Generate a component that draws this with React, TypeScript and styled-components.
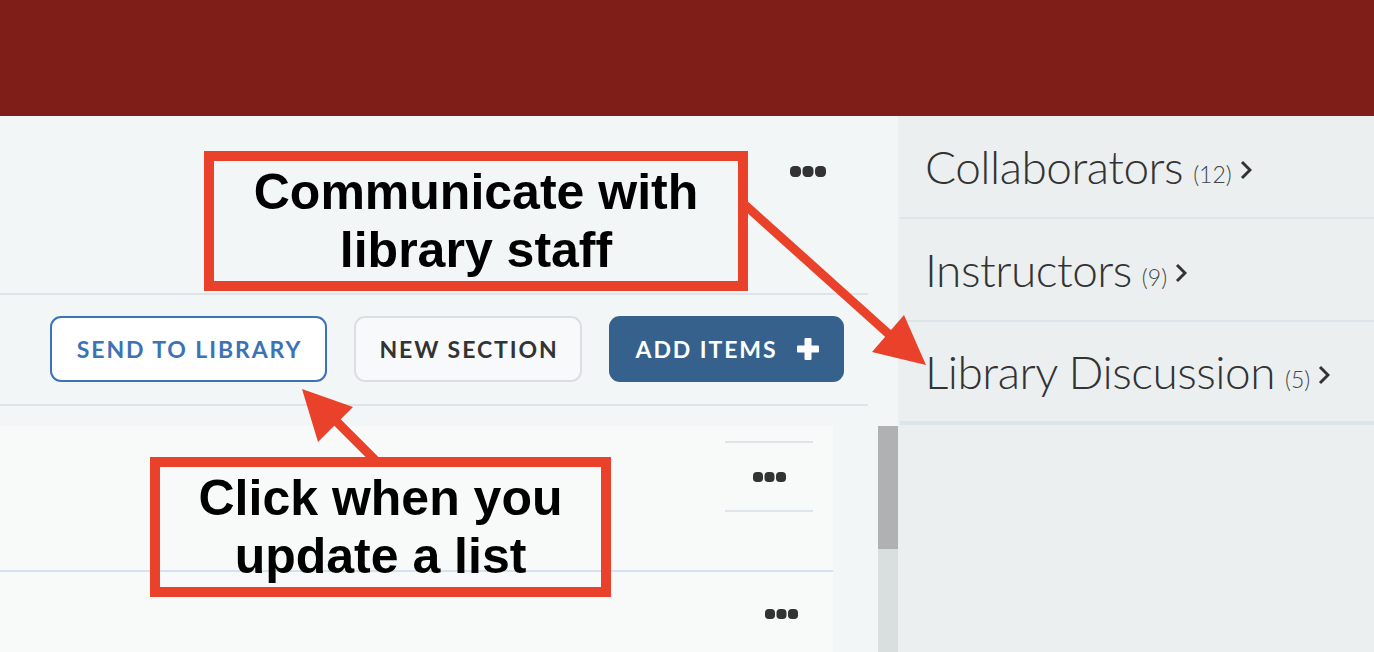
import React from "react";
import styled, { createGlobalStyle } from "styled-components";

const GlobalStyle = createGlobalStyle`
  html, body {
    margin: 0;
    padding: 0;
    width: 1374px;
    height: 652px;
    overflow: hidden;
    background: #f3f6f7;
  }
  * { box-sizing: border-box; }
`;

const Page = styled.div`
  position: relative;
  width: 1374px;
  height: 652px;
  display: flex;
  flex-direction: column;
  font-family: Lato, "Noto Sans", sans-serif;
`;

const TopBar = styled.header`
  height: 116px;
  flex: none;
  background: #7f1e18;
`;

const Body = styled.div`
  flex: 1;
  display: flex;
  min-height: 0;
`;

const Main = styled.main`
  width: 898px;
  flex: none;
  display: flex;
  flex-direction: column;
  background: #f3f6f7;
`;

const Header = styled.div`
  width: 868px;
  height: 179px;
  flex: none;
  display: flex;
  justify-content: flex-end;
  align-items: flex-start;
  padding: 50px 42px 0 0;
  border-bottom: 2px solid #dde5e9;
`;

const Toolbar = styled.div`
  width: 868px;
  height: 111px;
  flex: none;
  display: flex;
  justify-content: flex-end;
  align-items: flex-start;
  gap: 27px;
  padding: 21px 24px 0 0;
  border-bottom: 2px solid #dde5e9;
`;

type Variant = "outline" | "plain" | "primary";

const Button = styled.button<{ $variant: Variant; $width: number }>`
  width: ${(p) => p.$width}px;
  height: 66px;
  border-radius: 11px;
  display: flex;
  align-items: center;
  justify-content: center;
  gap: 20px;
  font-family: Lato, "Noto Sans", sans-serif;
  font-weight: 700;
  font-size: 23px;
  letter-spacing: 1.9px;
  padding: 0 0 0 2px;
  cursor: pointer;
  border: 2px solid
    ${(p) =>
      p.$variant === "outline" ? "#3c72b6" : p.$variant === "plain" ? "#dcdfe2" : "#36618c"};
  background: ${(p) =>
    p.$variant === "outline" ? "#ffffff" : p.$variant === "plain" ? "#f8f9fa" : "#36618c"};
  color: ${(p) =>
    p.$variant === "outline" ? "#3d72b5" : p.$variant === "plain" ? "#333333" : "#ffffff"};
`;

const ListArea = styled.div`
  flex: 1;
  display: flex;
  margin-top: 20px;
  min-height: 0;
`;

const List = styled.div`
  width: 833px;
  flex: none;
  background: #f8fafa;
  display: flex;
  flex-direction: column;
`;

const Row = styled.div<{ $height?: number }>`
  display: flex;
  justify-content: flex-end;
  align-items: flex-start;
  height: ${(p) => (p.$height ? `${p.$height}px` : "auto")};
  flex: ${(p) => (p.$height ? "none" : "1")};
  border-bottom: ${(p) => (p.$height ? "2px solid #d5e1ee" : "none")};
`;

const ActionBox = styled.div`
  width: 88px;
  height: 71px;
  margin: 15px 20px 0 0;
  border-top: 2px solid #dde5ea;
  border-bottom: 2px solid #dde5ea;
  display: flex;
  align-items: center;
  justify-content: center;
`;

const RowAction = styled.div`
  margin: 37px 35px 0 0;
  display: flex;
`;

const Gutter = styled.div`
  width: 45px;
  flex: none;
`;

const ScrollTrack = styled.div`
  width: 20px;
  flex: none;
  background: #d9dedf;
  display: flex;
  flex-direction: column;
`;

const ScrollThumb = styled.div`
  height: 123px;
  background: #b0b1b3;
`;

const Sidebar = styled.aside`
  flex: 1;
  background: #ebeff0;
  display: flex;
  flex-direction: column;
  padding-left: 2px;
`;

const SideItem = styled.a<{ $last?: boolean }>`
  height: 103px;
  display: flex;
  align-items: center;
  padding-left: 25px;
  border-bottom: ${(p) => (p.$last ? 4 : 2)}px solid #dce5e9;
  color: #333;
  text-decoration: none;
  font-family: Lato, "Noto Sans", sans-serif;
  font-weight: 300;
  white-space: nowrap;
`;

const SideLabel = styled.span`
  font-size: 46px;
  letter-spacing: -0.5px;
`;

const SideCount = styled.span`
  font-size: 23px;
  color: #444;
  margin-left: 10px;
  margin-top: 14px;
`;

const Chevron = styled.svg`
  margin-left: 8px;
  margin-top: 6px;
`;

const Overlay = styled.div`
  position: absolute;
  inset: 0;
  pointer-events: none;
`;

const Callout = styled.div<{ $x: number; $y: number; $w: number }>`
  position: absolute;
  left: ${(p) => p.$x}px;
  top: ${(p) => p.$y}px;
  width: ${(p) => p.$w}px;
  height: 140px;
  border: 10px solid #e9412a;
  display: flex;
  align-items: center;
  justify-content: center;
`;

const CalloutText = styled.p`
  margin: 0;
  text-align: center;
  font-family: "Liberation Sans", Arial, sans-serif;
  font-weight: 700;
  font-size: 50px;
  line-height: 58px;
  color: #000;
  white-space: nowrap;
`;

const ArrowLayer = styled.svg`
  position: absolute;
  left: 0;
  top: 0;
`;

const Dots = ({ size = 11 }: { size?: number }) => {
  const gap = 1.5;
  const w = size * 3 + gap * 2;
  return (
    <svg width={w} height={size} viewBox={`0 0 ${w} ${size}`}>
      {[0, 1, 2].map((i) => (
        <rect
          key={i}
          x={i * (size + gap)}
          y={0}
          width={size}
          height={size}
          rx={size * 0.38}
          fill="#333"
        />
      ))}
    </svg>
  );
};

const Plus = () => (
  <svg width="22" height="22" viewBox="0 0 22 22">
    <rect x="7.5" y="0" width="7" height="22" rx="1" fill="#fff" />
    <rect x="0" y="7.5" width="22" height="7" rx="1" fill="#fff" />
  </svg>
);

const sideItems = [
  { label: "Collaborators", count: 12 },
  { label: "Instructors", count: 9 },
  { label: "Library Discussion", count: 5 },
];

export default function App() {
  return (
    <Page>
      <GlobalStyle />
      <TopBar />
      <Body>
        <Main>
          <Header>
            <Dots size={11} />
          </Header>
          <Toolbar>
            <Button $variant="outline" $width={277}>SEND TO LIBRARY</Button>
            <Button $variant="plain" $width={228}>NEW SECTION</Button>
            <Button $variant="primary" $width={235}>
              ADD ITEMS
              <Plus />
            </Button>
          </Toolbar>
          <ListArea>
            <List>
              <Row $height={146}>
                <ActionBox>
                  <Dots size={10} />
                </ActionBox>
              </Row>
              <Row>
                <RowAction>
                  <Dots size={10} />
                </RowAction>
              </Row>
            </List>
            <Gutter />
            <ScrollTrack>
              <ScrollThumb />
            </ScrollTrack>
          </ListArea>
        </Main>
        <Sidebar>
          {sideItems.map((it, i) => (
            <SideItem key={it.label} $last={i === sideItems.length - 1}>
              <SideLabel>{it.label}</SideLabel>
              <SideCount>({it.count})</SideCount>
              <Chevron width="12" height="20" viewBox="0 0 12 20">
                <path d="M2 2 L10 10 L2 18" fill="none" stroke="#333" strokeWidth="3" />
              </Chevron>
            </SideItem>
          ))}
        </Sidebar>
      </Body>
      <Overlay>
        <ArrowLayer width="1374" height="652" viewBox="0 0 1374 652">
          <line x1="744" y1="204" x2="892" y2="337" stroke="#e9412a" strokeWidth="9" />
          <polygon points="872,352 904,315 926,365" fill="#e9412a" />
          <line x1="375" y1="460" x2="328" y2="413" stroke="#e9412a" strokeWidth="9" />
          <polygon points="302,389 353,407 318,442" fill="#e9412a" />
        </ArrowLayer>
        <Callout $x={204} $y={151} $w={544}>
          <CalloutText>
            Communicate with
            <br />
            library staff
          </CalloutText>
        </Callout>
        <Callout $x={150} $y={457} $w={461}>
          <CalloutText>
            Click when you
            <br />
            update a list
          </CalloutText>
        </Callout>
      </Overlay>
    </Page>
  );
}
